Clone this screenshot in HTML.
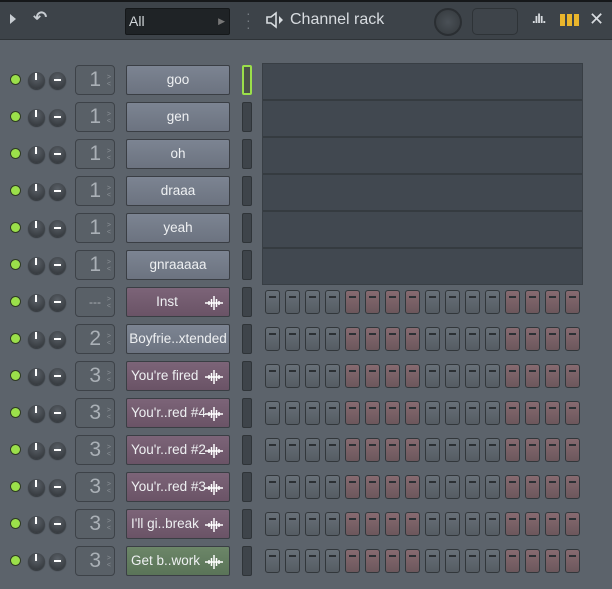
<!DOCTYPE html>
<html><head><meta charset="utf-8"><style>
*{margin:0;padding:0;box-sizing:border-box}
body{width:612px;height:589px;overflow:hidden;background:#5c636b;font-family:"Liberation Sans","DejaVu Sans",sans-serif;position:relative}
.top{position:absolute;left:0;top:0;width:612px;height:40px;background:#3d4349;border-top:2px solid #16181a;border-bottom:1px solid #2e3337}
.a{position:absolute}
.led{position:absolute;width:9px;height:9px;border-radius:50%;background:#9be04a;box-shadow:0 0 0 1px #2f3a24}
.knob{position:absolute;width:17px;height:17px;border-radius:50%;background:radial-gradient(circle at 50% 35%,#5a6067,#2c3034);box-shadow:0 1px 1px #33383c}
.num{position:absolute;width:40px;height:30px;border:1px solid #3d4248;border-radius:4px;background:#596067;color:#aab0b6;font-size:21px;text-align:right;padding-right:13px;line-height:28px;font-family:"Liberation Sans Narrow","Liberation Sans",sans-serif;font-weight:normal}
.num i{position:absolute;right:3px;font-style:normal;font-size:7px;color:#8a9096;line-height:7px}
.nb{position:absolute;width:104px;height:30px;border:1px solid #3a3e44;border-radius:2px;color:#eef0f2;font-size:13.5px;line-height:28px;text-align:center;white-space:nowrap;overflow:hidden}
.slot{position:absolute;width:10px;height:30px;background:#3e444a;border:1px solid #2f3438;border-radius:2px}
.st{position:absolute;width:15px;height:24px;border-radius:3px;border:1px solid #32373b}
.st::after{content:"";position:absolute;left:3px;top:5px;width:7px;height:2px;background:#2c3034}
.g{background:linear-gradient(#687078,#555c63)}
.r{background:linear-gradient(#876a70,#6c575c)}
.wave{position:absolute;right:6px;top:7px}
</style></head><body>
<div class="top"></div>
<div class="a" style="left:10px;top:14px;width:0;height:0;border-left:6px solid #c8cdd2;border-top:5px solid transparent;border-bottom:5px solid transparent"></div>
<div class="a" style="left:33px;top:8px;color:#c8cdd2;font-size:17px;font-weight:bold">↶</div>
<div class="a" style="left:125px;top:8px;width:105px;height:27px;background:#1f2326;border:1px solid #15181a;border-radius:2px;color:#d0d4d8;font-size:14px;line-height:25px;padding-left:3px">All<span style="position:absolute;right:4px;top:0;color:#777;font-size:9px">▶</span></div>
<div class="a" style="left:246px;top:10px;color:#777d83;font-size:14px;line-height:7px">·<br>·<br>·</div>
<svg class="a" style="left:265px;top:11px" width="20" height="18" viewBox="0 0 20 18"><path d="M2 6h4l5-4v14l-5-4H2z" fill="none" stroke="#d8dce0" stroke-width="1.6"/><path d="M14 5l4 4-4 4z" fill="#d8dce0"/></svg>
<div class="a" style="left:290px;top:11px;color:#d8dce0;font-size:16px">Channel rack</div>
<div class="a" style="left:434px;top:8px;width:28px;height:28px;border-radius:50%;background:radial-gradient(#4a5056,#33383c);border:2px solid #2a2e32"></div>
<div class="a" style="left:472px;top:8px;width:46px;height:27px;border-radius:5px;background:#3e444a;border:1px solid #2e3337"></div>
<div class="a" style="left:532px;top:11px;color:#d8dce0;font-size:13px;font-weight:bold;letter-spacing:-1px">.ılı.</div>
<div class="a" style="left:560px;top:14px;width:19px;height:12px;background:repeating-linear-gradient(90deg,#e9b52c 0 5px,#3d4349 5px 7px)"></div>
<div class="a" style="left:589px;top:9px;color:#d8dce0;font-size:18px">✕</div>
<div class="a" style="left:262px;top:63px;width:321px;height:222px;background:#414850;border:1px solid #383e44"></div>
<div id="rows"></div>
<script>
var names=[["goo","p"],["gen","p"],["oh","p"],["draaa","p"],["yeah","p"],["gnraaaaa","p"],["Inst","m"],["Boyfrie..xtended","p"],["You're fired","m"],["You'r..red #4","m"],["You'r..red #2","m"],["You'r..red #3","m"],["I'll gi..break","m"],["Get b..work","gr"]];
var nums=["1","1","1","1","1","1","---","2","3","3","3","3","3","3"];
var wave='<svg class="wave" width="18" height="16" viewBox="0 0 18 16"><path d="M0 8h18M4 6v4M6.5 4v8M9 1v14M11.5 4v8M14 6v4" stroke="#fff" stroke-width="1.5" fill="none"/></svg>';
var h="";
for(var i=0;i<14;i++){var c=80+37*i,t=c-15;
h+='<div class="led" style="left:11px;top:'+(c-5)+'px"></div>';
h+='<div class="knob" style="left:28px;top:'+(c-8)+'px"><div style="position:absolute;left:7px;top:1px;width:2px;height:7px;background:#fff"></div></div>';
h+='<div class="knob" style="left:49px;top:'+(c-8)+'px"><div style="position:absolute;left:5px;top:7px;width:7px;height:2px;background:#fff"></div></div>';
h+='<div class="num" style="left:75px;top:'+t+'px;'+(nums[i]=="---"?'font-size:12px;':'')+'">'+nums[i]+'<i style="top:8px">&gt;</i><i style="top:15px">&lt;</i></div>';
var bg=names[i][1]=="p"?"linear-gradient(#7c8492,#6c7380)":names[i][1]=="m"?"linear-gradient(#7c6478,#6a5366)":"linear-gradient(#6c8668,#5a7458)";
var w=names[i][1]=="p"?"":wave;
var al=names[i][1]=="p"?"":"text-align:left;padding-left:4px;";
if(names[i][0]=="Inst")al="padding-right:22px;";
h+='<div class="nb" style="left:126px;top:'+t+'px;background:'+bg+';'+al+'">'+names[i][0]+w+'</div>';
h+='<div class="slot" style="left:242px;top:'+t+'px;'+(i==0?'border:2px solid #9be04a;background:#4a5248':'')+'"></div>';
if(i>0&&i<6)h+='<div class="a" style="left:263px;top:'+(t-3)+'px;width:319px;height:2px;background:#353b40"></div>';
if(i>=6)for(var j=0;j<16;j++){h+='<div class="st '+((Math.floor(j/4)%2)?'r':'g')+'" style="left:'+(265+20*j)+'px;top:'+(c-12)+'px"></div>';}
}
document.getElementById("rows").innerHTML=h;
</script>
</body></html>
